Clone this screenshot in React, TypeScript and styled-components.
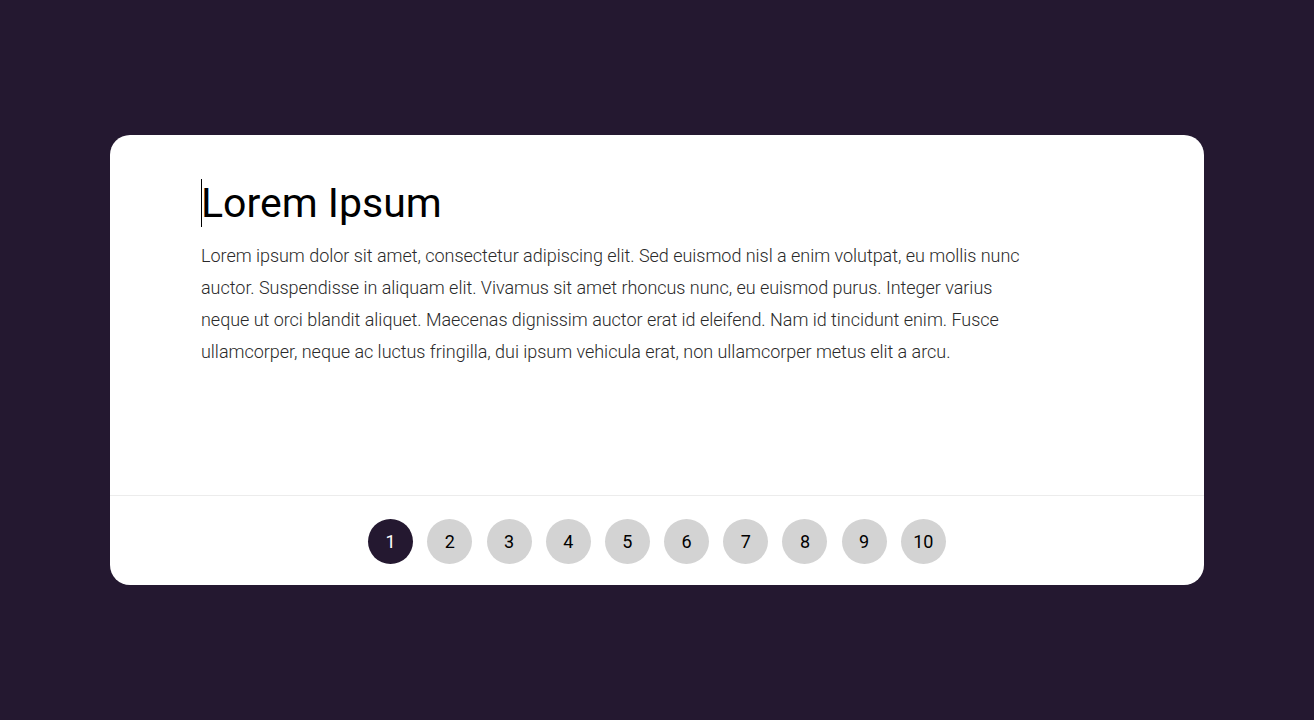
import styled, { createGlobalStyle } from 'styled-components'

const GlobalStyle = createGlobalStyle`
    html, body {
        margin: 0;
        padding: 0;
        height: 100%;
        background-color: #241830;
        font-family: Roboto, 'Liberation Sans', sans-serif;
    }
    #root {
        height: 100%;
    }
`

const Page = styled.div`
    height: 100vh;
    display: flex;
    align-items: center;
    justify-content: center;
`

const Card = styled.div`
    width: 1094px;
    background-color: white;
    border-radius: 20px;
    overflow: hidden;
`

const Article = styled.div`
    height: 361px;
    box-sizing: border-box;
    padding: 44px 91px 0;
    border-bottom: 1px solid #ececec;
`

const Title = styled.h1`
    position: relative;
    margin: 0;
    font-size: 41px;
    font-weight: 400;
    line-height: 48px;
    color: black;

    &::before {
        content: '';
        position: absolute;
        left: 0;
        top: 0;
        width: 1px;
        height: 48px;
        background-color: black;
    }
`

const Text = styled.p`
    margin: 13px 0 0;
    width: 826px;
    font-size: 18px;
    font-weight: 300;
    line-height: 32px;
    letter-spacing: -0.03px;
    color: #2a2a2a;
`

const Pager = styled.div`
    display: flex;
    justify-content: center;
    gap: 14.2px;
    padding: 23px 0 21px;
`

const PageButton = styled.button<{ $active?: boolean }>`
    width: 45px;
    height: 45px;
    border: none;
    border-radius: 50%;
    padding: 0;
    font-family: Roboto, 'Liberation Sans', sans-serif;
    font-size: 18px;
    font-weight: 400;
    cursor: pointer;
    background-color: ${p => (p.$active ? '#241830' : '#d3d3d3')};
    color: ${p => (p.$active ? 'white' : 'black')};
`

const pages = [1, 2, 3, 4, 5, 6, 7, 8, 9, 10]

const App = () => {
  return (
    <>
      <GlobalStyle />
      <Page>
        <Card>
          <Article>
            <Title>{"Lorem Ipsum"}</Title>
            <Text>
              {"Lorem ipsum dolor sit amet, consectetur adipiscing elit. Sed euismod nisl a enim volutpat, eu mollis nunc auctor. Suspendisse in aliquam elit. Vivamus sit amet rhoncus nunc, eu euismod purus. Integer varius neque ut orci blandit aliquet. Maecenas dignissim auctor erat id eleifend. Nam id tincidunt enim. Fusce ullamcorper, neque ac luctus fringilla, dui ipsum vehicula erat, non ullamcorper metus elit a arcu."}
            </Text>
          </Article>
          <Pager>
            {pages.map(n => (
              <PageButton key={n} $active={n === 1}>{n}</PageButton>
            ))}
          </Pager>
        </Card>
      </Page>
    </>
  )
}

export default App
